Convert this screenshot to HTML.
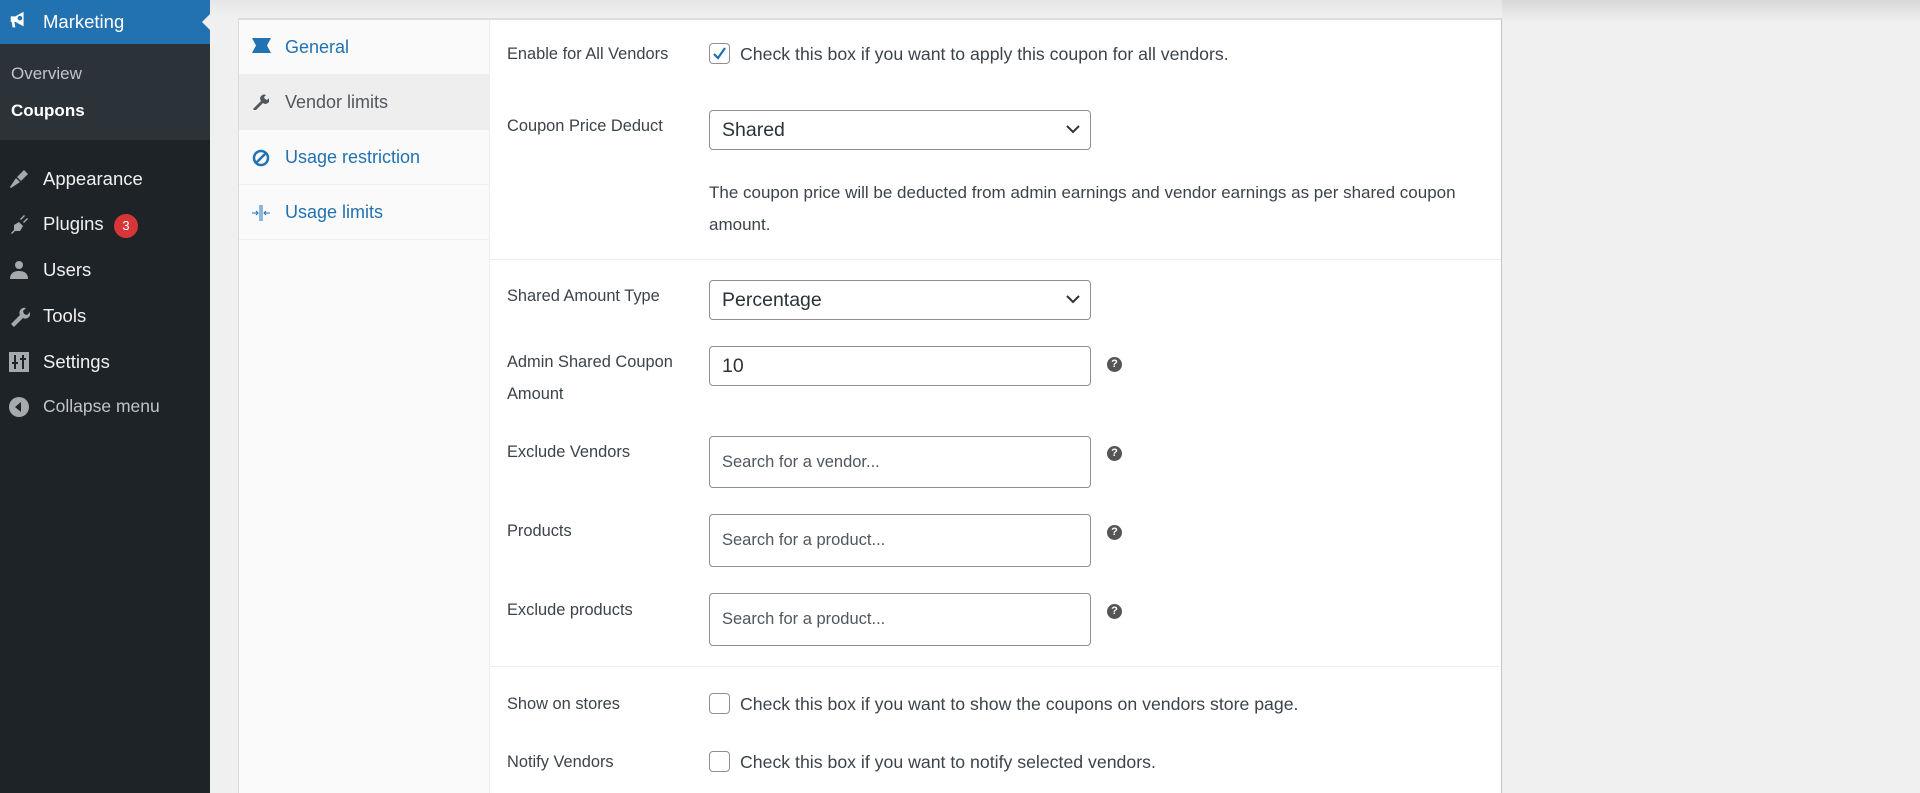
<!DOCTYPE html>
<html><head><meta charset="utf-8"><style>
*{box-sizing:border-box;margin:0;padding:0}
html,body{width:1920px;height:793px;overflow:hidden}
body{background:#f0f0f1;font-family:"Liberation Sans",sans-serif;position:relative}
.abs{position:absolute}
#sb{left:0;top:0;width:210px;height:793px;background:#1d2327}
#mk{left:0;top:0;width:210px;height:44px;background:#2271b1;color:#fff;font-size:18.5px}
#sub{left:0;top:44px;width:210px;height:96px;background:#2c3338}
.si{position:absolute;left:43px;color:#f0f0f1;font-size:18.5px}
.ic{position:absolute;left:8px;width:22px;height:22px}
#panel{left:238px;top:18px;width:1264px;height:790px;background:#fff;border-left:1px solid #dcdcde;border-right:1px solid #c3c4c7;border-top:2px solid #dcdcde}
#tabs{left:239px;top:20px;width:251px;height:773px;background:#fafafa;border-right:1px solid #eee}
.tab{position:absolute;left:0;width:251px;height:55px;border-bottom:1px solid #eee;color:#2271b1;font-size:18px;padding-left:46px;line-height:55px}
.lab{position:absolute;left:507px;color:#3c434a;font-size:16.4px}
.inp{position:absolute;left:709px;width:382px;border:1px solid #8c8f94;border-radius:4px;background:#fff;color:#2c3338;font-size:19.5px;padding-left:12px}
.ph{color:#50575e;font-size:16.5px}
.cb{position:absolute;left:709px;width:21px;height:21px;border:1px solid #8c8f94;border-radius:4px;background:#fff}
.ct{position:absolute;left:740px;color:#3c434a;font-size:17.7px}
.help{position:absolute;left:1107px;width:15px;height:15px;border-radius:50%;background:#555;color:#fff;font-size:11px;font-weight:bold;text-align:center;line-height:15px}
.sep{position:absolute;left:490px;width:1011px;height:1px;background:#eee}
</style></head><body>
<div class="abs" style="left:210px;top:0;width:1710px;height:18px;background:linear-gradient(#e6e6e6,#f0f0f1)"></div>
<div id="panel" class="abs"></div>
<div class="abs" style="left:1502px;top:0;width:418px;height:60px;background:linear-gradient(#d8d8d8,#f0f0f1 40%)"></div>
<div id="sb" class="abs"></div>
<div id="mk" class="abs"><svg class="ic" style="top:9px;left:7px;width:24px" viewBox="0 0 24 24"><path d="M3 8h5l9-5v16l-9-5H7l1 6H5l-1-6H3z" fill="#fff"/><circle cx="13" cy="10" r="2.5" fill="#2271b1"/></svg><span style="position:absolute;left:43px;top:11px">Marketing</span>
<div style="position:absolute;right:0;top:14px;border:8px solid transparent;border-right-color:#f0f0f1"></div></div>
<div id="sub" class="abs"><span style="position:absolute;left:11px;top:20px;color:#c3c4c7;font-size:17px">Overview</span><span style="position:absolute;left:11px;top:57px;color:#fff;font-size:17px;font-weight:bold">Coupons</span></div>
<svg class="ic" style="top:167px" viewBox="0 0 22 22"><path d="M2 20l6-9 4 4-9 6zM9 10l7-7 4 4-7 7z" fill="#a7aaad"/></svg><span class="si" style="top:168px">Appearance</span>
<svg class="ic" style="top:213px" viewBox="0 0 22 22"><path d="M3 20l3-3 0-5 5-3 4 4-3 5-5 0-3 3zM12 6l4-4 1 1-4 4zM15 9l4-4 1 1-4 4z" fill="#a7aaad"/></svg><span class="si" style="top:213px">Plugins</span>
<div class="abs" style="left:114px;top:214px;width:24px;height:24px;border-radius:12px;background:#d63638;color:#fff;font-size:13px;text-align:center;line-height:24px">3</div>
<svg class="ic" style="top:259px" viewBox="0 0 22 22"><circle cx="11" cy="6" r="4" fill="#a7aaad"/><path d="M2 20c0-6 4-8 9-8s9 2 9 8z" fill="#a7aaad"/></svg><span class="si" style="top:259px">Users</span>
<svg class="ic" style="top:305px" viewBox="0 0 22 22"><path d="M3 19l9-9a5 5 0 0 1 6-7l-3 3 1 3 3 1 3-3a5 5 0 0 1-7 6l-9 9z" fill="#a7aaad"/></svg><span class="si" style="top:305px">Tools</span>
<svg class="ic" style="top:351px" viewBox="0 0 22 22"><rect x="1" y="1" width="20" height="20" fill="#a7aaad"/><path d="M7 4v14M4 12h6M15 4v14M12 8h6" stroke="#1d2327" stroke-width="2"/></svg><span class="si" style="top:351px">Settings</span>
<svg class="ic" style="top:396px" viewBox="0 0 22 22"><circle cx="11" cy="11" r="10" fill="#a7aaad"/><path d="M13 6v10l-6-5z" fill="#1d2327"/></svg><span class="si" style="top:396px;color:#c3c4c7;font-size:17.5px">Collapse menu</span>

<div id="tabs" class="abs">
<div class="tab" style="top:0"><svg style="position:absolute;left:13px;top:18px" width="19" height="15" viewBox="0 0 19 15"><path d="M0 0h19l-4 7.5 4 7.5H0l4-7.5z" fill="#2271b1"/></svg>General</div>
<div class="tab" style="top:55px;background:#eee;color:#50575e"><svg style="position:absolute;left:13px;top:18px" width="17" height="17" viewBox="0 0 17 17"><path d="M1 16l8-8a4 4 0 0 1 5-6l-2 2 1 2 2 1 2-2a4 4 0 0 1-6 5l-8 8z" fill="#50575e"/></svg>Vendor limits</div>
<div class="tab" style="top:110px"><svg style="position:absolute;left:13px;top:19px" width="18" height="18" viewBox="0 0 18 18"><circle cx="9" cy="9" r="7" fill="none" stroke="#2271b1" stroke-width="2.5"/><path d="M4 14L14 4" stroke="#2271b1" stroke-width="2.5"/></svg>Usage restriction</div>
<div class="tab" style="top:165px"><svg style="position:absolute;left:13px;top:20px" width="18" height="16" viewBox="0 0 18 16"><path d="M8 0v16M10 0v16M0 8h6M12 8h6M4 6l2 2-2 2M14 6l-2 2 2 2" stroke="#2271b1" stroke-width="1" fill="none"/></svg>Usage limits</div>
</div>

<div class="lab" style="top:45px">Enable for All Vendors</div>
<div class="cb" style="top:43px"><svg width="19" height="19" viewBox="0 0 19 19"><path d="M4 10l4 4 7-10" stroke="#2271b1" stroke-width="2.2" fill="none"/></svg></div>
<div class="ct" style="top:44px">Check this box if you want to apply this coupon for all vendors.</div>

<div class="lab" style="top:117px">Coupon Price Deduct</div>
<div class="inp" style="top:110px;height:40px;line-height:38px">Shared<svg style="position:absolute;right:10px;top:13px" width="14" height="10" viewBox="0 0 14 10"><path d="M1 2l6 6 6-6" stroke="#2c3338" stroke-width="2" fill="none"/></svg></div>
<div class="abs" style="left:709px;top:177px;width:780px;color:#3c434a;font-size:17px;line-height:32px">The coupon price will be deducted from admin earnings and vendor earnings as per shared coupon amount.</div>
<div class="sep" style="top:259px"></div>

<div class="lab" style="top:287px">Shared Amount Type</div>
<div class="inp" style="top:280px;height:40px;line-height:38px">Percentage<svg style="position:absolute;right:10px;top:13px" width="14" height="10" viewBox="0 0 14 10"><path d="M1 2l6 6 6-6" stroke="#2c3338" stroke-width="2" fill="none"/></svg></div>

<div class="lab" style="top:346px;line-height:32px">Admin Shared Coupon<br>Amount</div>
<div class="inp" style="top:346px;height:40px;line-height:38px">10</div>
<div class="help" style="top:357px">?</div>

<div class="lab" style="top:443px">Exclude Vendors</div>
<div class="inp ph" style="top:436px;height:52px;line-height:50px">Search for a vendor...</div>
<div class="help" style="top:446px">?</div>

<div class="lab" style="top:522px">Products</div>
<div class="inp ph" style="top:514px;height:53px;line-height:51px">Search for a product...</div>
<div class="help" style="top:525px">?</div>

<div class="lab" style="top:601px">Exclude products</div>
<div class="inp ph" style="top:593px;height:53px;line-height:51px">Search for a product...</div>
<div class="help" style="top:604px">?</div>
<div class="sep" style="top:666px"></div>

<div class="lab" style="top:695px">Show on stores</div>
<div class="cb" style="top:693px"></div>
<div class="ct" style="top:694px">Check this box if you want to show the coupons on vendors store page.</div>

<div class="lab" style="top:753px">Notify Vendors</div>
<div class="cb" style="top:751px"></div>
<div class="ct" style="top:752px">Check this box if you want to notify selected vendors.</div>
</body></html>
